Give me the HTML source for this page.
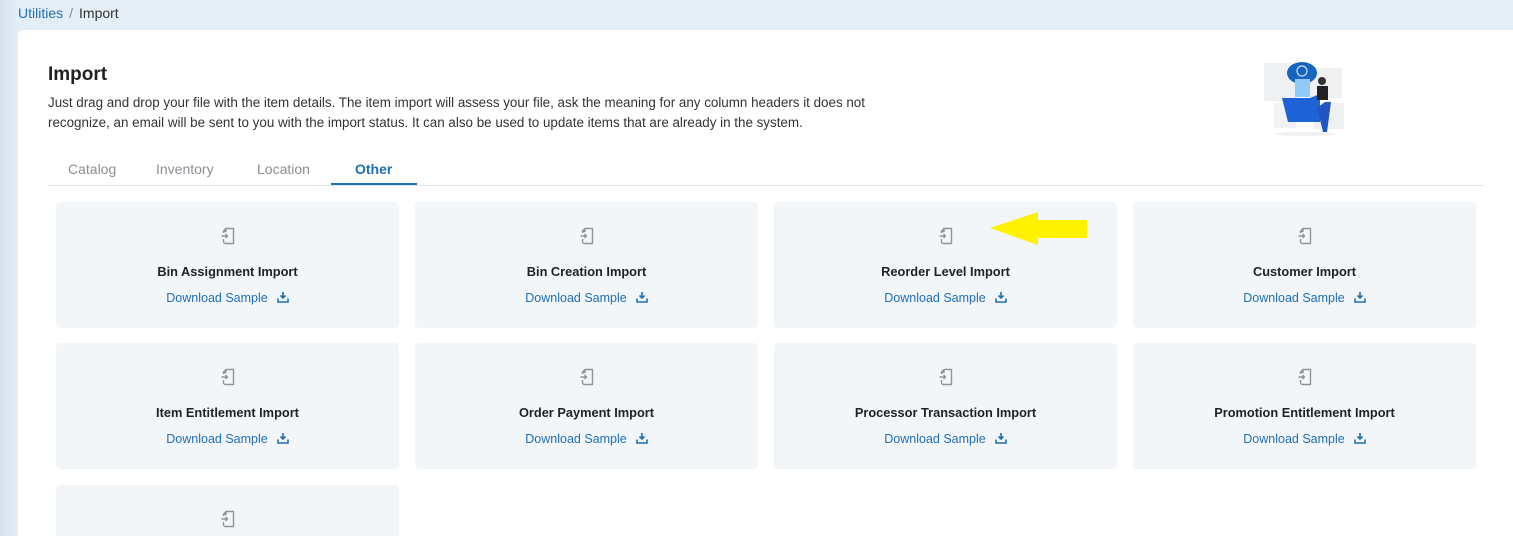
<!DOCTYPE html>
<html style="height:536px;overflow:hidden"><head><style>
*{margin:0;padding:0;box-sizing:border-box}
body{width:1513px;height:536px;overflow:hidden;background:#e4eef6;font-family:"Liberation Sans",sans-serif;position:relative}
.bc{position:absolute;left:18px;top:5px;font-size:14px;color:#333}
.bc a{color:#1f6fb5}
.bc span{color:#888;margin:0 6px}
.main{position:absolute;left:18px;top:30px;right:0;height:506px;background:#fff;border-radius:6px 0 0 0}
h1{position:absolute;left:30px;top:34px;font-size:19px;font-weight:bold;color:#222}
.desc{position:absolute;left:30px;top:63px;width:860px;font-size:13.4px;line-height:20px;color:#333}
.tabs{position:absolute;left:30px;top:125px;width:1436px;height:31px;border-bottom:1px solid #e2e6ea}
.tab{position:absolute;top:6px;font-size:14px;color:#8a8f94}
.tab.on{color:#1f6fb5;font-weight:bold}
.ul{position:absolute;left:283px;top:28px;width:86px;height:2px;background:#1f6fb5}
.card{position:absolute;width:343px;height:126px;background:#f3f6f9;border-radius:4px;text-align:center}
.card svg.ic{position:absolute;left:164px;top:25px}
.t{position:absolute;top:62px;left:0;right:0;font-size:12.8px;color:#222;font-weight:bold}
.l{position:absolute;top:89px;left:0;right:0;font-size:12.5px;color:#1f6fb5}
</style></head><body>
<div style="position:absolute;left:0;top:0;width:18px;height:536px;background:linear-gradient(90deg,#d5e2ee,#e4eef6)"></div>
<div class="bc"><a>Utilities</a><span>/</span>Import</div>
<div class="main">
<h1>Import</h1>
<div class="desc">Just drag and drop your file with the item details. The item import will assess your file, ask the meaning for any column headers it does not recognize, an email will be sent to you with the import status. It can also be used to update items that are already in the system.</div>
<div class="tabs">
<div class="tab" style="left:20px">Catalog</div>
<div class="tab" style="left:108px">Inventory</div>
<div class="tab" style="left:209px">Location</div>
<div class="tab on" style="left:307px">Other</div>
<div class="ul"></div>
</div>
<svg style="position:absolute;left:1244px;top:28px" width="86" height="80" viewBox="0 0 86 80">
<rect x="2" y="5" width="34" height="38" fill="#eef0f2"/><rect x="48" y="10" width="32" height="30" fill="#eef0f2"/>
<rect x="12" y="45" width="22" height="25" fill="#f1f2f4"/><rect x="52" y="45" width="30" height="26" fill="#eef0f2"/>
<ellipse cx="40" cy="15" rx="15" ry="11" fill="#1565c0"/><circle cx="40" cy="13" r="5" fill="none" stroke="#cde" stroke-width="1.2"/>
<rect x="33" y="21" width="15" height="18" fill="#90caf9"/>
<path d="M20 40h28l10-4v28H26z" fill="#1e63d6"/>
<circle cx="60" cy="23" r="4" fill="#333"/><rect x="55" y="28" width="11" height="14" fill="#222"/>
<path d="M55 50l8-6 6 0-4 30-4 0z" fill="#1e55c0"/>
<ellipse cx="43" cy="76" rx="30" ry="2" fill="#f0f0f0"/>
</svg>
</div>
<div id="cards"></div>
<svg style="position:absolute;left:990px;top:212px;z-index:5" width="98" height="34"><path d="M0 16L48 0V8H97V26H48V33Z" fill="#fff200"/></svg>
<script>
var names=["Bin Assignment Import","Bin Creation Import","Reorder Level Import","Customer Import","Item Entitlement Import","Order Payment Import","Processor Transaction Import","Promotion Entitlement Import",""];
var xs=[56,415,774,1133],ys=[202,343,485];
var ic='<svg class="ic" width="16" height="18" viewBox="0 0 16 18" fill="none" stroke="#8e949a" stroke-width="1.4" stroke-linejoin="round"><path d="M6 1.5h7.5v15H5.5a2 2 0 0 1-2-2V12M3.5 6V4L6 1.5V4.5H3.5"/><path d="M1.5 9h6M5.5 7l2 2-2 2"/></svg>';
var dl='<svg width="12" height="12" viewBox="0 0 12 12" style="margin-left:9px;vertical-align:-1px" fill="none" stroke="#1f6fb5" stroke-width="1.6"><path d="M6 1v6M3.5 4.5L6 7l2.5-2.5M1 7.5V11h10V7.5"/></svg>';
var h='';
names.forEach(function(n,i){var x=xs[i%4],y=ys[Math.floor(i/4)];
h+='<div class="card" style="left:'+x+'px;top:'+y+'px'+(n?'':';height:51px;border-radius:4px 4px 0 0')+'">'+ic+(n?'<div class="t">'+n+'</div><div class="l">Download Sample'+dl+'</div>':'')+'</div>';});
document.getElementById('cards').innerHTML=h;
</script>
</body></html>
